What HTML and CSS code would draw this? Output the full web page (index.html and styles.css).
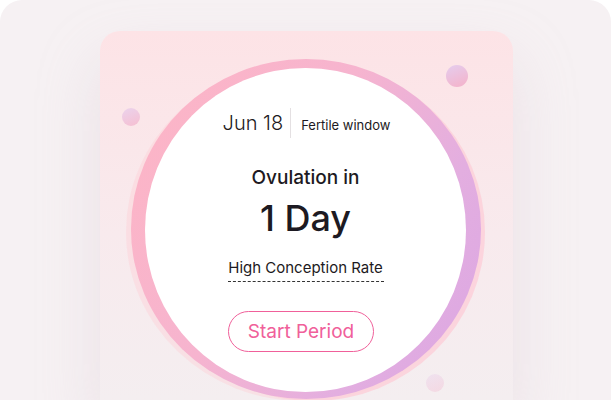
FILE: index.html
```html
<!DOCTYPE html>
<html lang="en">
<head>
  <meta charset="UTF-8" />
  <meta name="viewport" content="width=device-width, initial-scale=1.0"/>
  <title>Ovulation Tracker</title>
  <link rel="stylesheet" href="styles.css">
</head>
<body>
  <div class="app">
    <div class="panel">
      <svg class="ring" width="413" height="369" viewBox="0 0 413 369">
        <defs>
          <linearGradient id="ringGrad" x1="0" y1="0.15" x2="1" y2="0.7">
            <stop offset="0" stop-color="#fdb5c6"/>
            <stop offset="0.45" stop-color="#f6b4cf"/>
            <stop offset="0.8" stop-color="#e3aee0"/>
            <stop offset="1" stop-color="#dea9e2"/>
          </linearGradient>
          <linearGradient id="bubbleGrad" x1="0" y1="0" x2="0.4" y2="1">
            <stop offset="0" stop-color="#e5cdee"/>
            <stop offset="1" stop-color="#f2b6cf"/>
          </linearGradient>
        </defs>
        <ellipse cx="203" cy="201" rx="177" ry="169" fill="#fcd0d8" opacity="0.45"/>
        <ellipse cx="213" cy="201" rx="172" ry="169" fill="#fcd1da" opacity="0.9"/>
        <ellipse cx="206" cy="198" rx="175" ry="170" fill="url(#ringGrad)"/>
        <circle cx="357" cy="45" r="11" fill="url(#bubbleGrad)"/>
        <circle cx="31" cy="86" r="9" fill="url(#bubbleGrad)" opacity="0.75"/>
        <circle cx="335" cy="352" r="9" fill="url(#bubbleGrad)" opacity="0.35"/>
      </svg>

      <div class="dial">
        <div class="date-row">
          <span class="date">Jun 18</span>
          <span class="phase">Fertile window</span>
        </div>
        <p class="countdown-label">Ovulation in</p>
        <p class="countdown">1 Day</p>
        <p class="rate">High Conception Rate</p>
        <button type="button" class="start-btn">Start Period</button>
      </div>
    </div>
  </div>
</body>
</html>
```

FILE: styles.css
```css
* {
  box-sizing: border-box;
  font-family: Inter, "Noto Sans", sans-serif;
}

body {
  margin: 0;
  background: #ffffff;
  overflow: hidden;
}

.app {
  width: 611px;
  height: 400px;
  background: #f6f1f3;
  border-radius: 22px 22px 0 0;
  padding-top: 31px;
  overflow: hidden;
}

.panel {
  position: relative;
  width: 413px;
  height: 369px;
  margin-left: 100px;
  border-radius: 20px 20px 0 0;
  background: linear-gradient(180deg, #fde3e6 0%, #f8eaed 55%, #f4eef0 100%);
  box-shadow: 0 30px 60px rgba(215, 195, 205, 0.35);
  padding: 37px 0 0 45px;
}

.ring {
  position: absolute;
  left: 0;
  top: 0;
}

.dial {
  position: relative;
  width: 321px;
  height: 324px;
  border-radius: 50%;
  background: #ffffff;
  display: flex;
  flex-direction: column;
  align-items: center;
  padding-top: 40px;
  color: #1d1a22;
}

.date-row {
  display: flex;
  align-items: center;
  margin-left: 2px;
}

.date {
  font-size: 20px;
  font-weight: 300;
  padding-right: 7px;
  border-right: 1px solid #e4e0e2;
  line-height: 30px;
}

.phase {
  font-size: 13px;
  padding-left: 10px;
  padding-top: 3px;
}

.countdown-label {
  margin: 28px 0 0;
  font-size: 19px;
  font-weight: 500;
}

.countdown {
  margin: 7px 0 0;
  font-size: 36px;
  font-weight: 500;
  line-height: 44px;
}

.rate {
  margin: 18px 0 0;
  font-size: 15px;
  padding: 0 0 4px;
  border-bottom: 1px dashed #333;
  width: 156px;
  text-align: center;
}

.start-btn {
  margin: 29px 9px 0 0;
  width: 146px;
  height: 41px;
  border: 1px solid #f0609a;
  border-radius: 21px;
  background: #ffffff;
  color: #f0609a;
  font-size: 19px;
  cursor: pointer;
}
```
